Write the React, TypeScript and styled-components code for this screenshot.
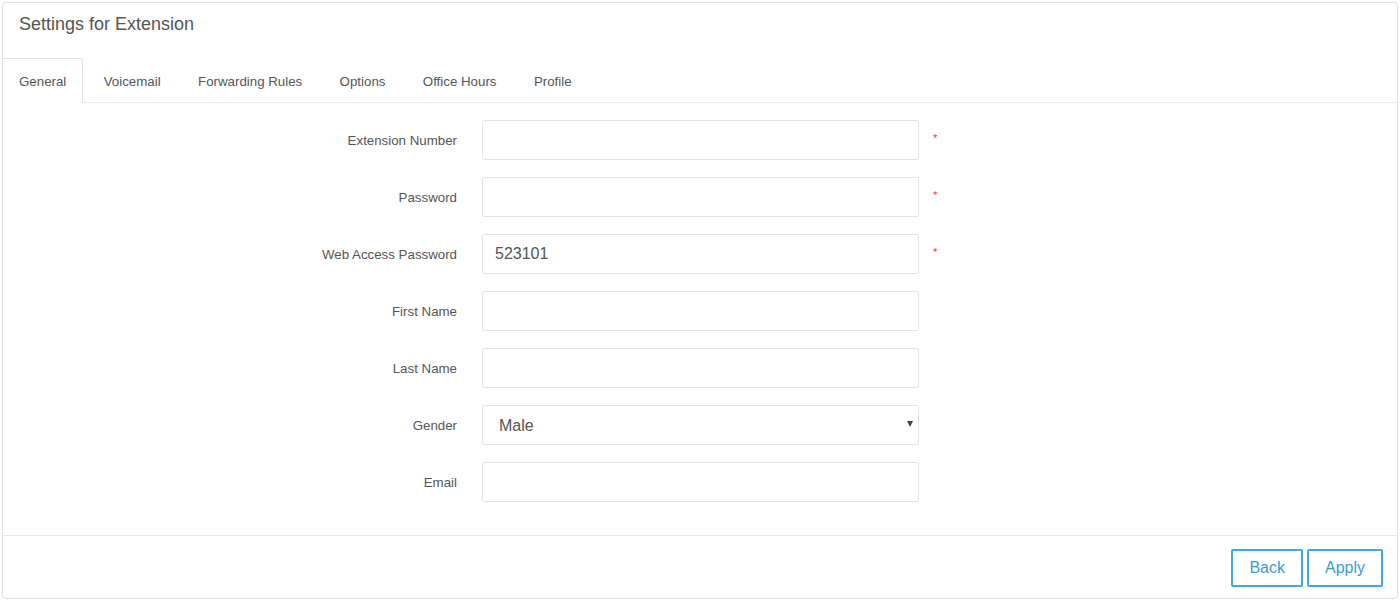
import React, { useState } from "react";
import styled, { createGlobalStyle } from "styled-components";

const GlobalStyle = createGlobalStyle`
  html, body {
    margin: 0;
    padding: 0;
    background: #fff;
    font-family: "Liberation Sans", Arial, sans-serif;
  }
  * { box-sizing: border-box; }
`;

const Panel = styled.div`
  margin: 2px 2px 2px 2px;
  height: 597px;
  border: 1px solid #dedede;
  border-radius: 4px;
  display: flex;
  flex-direction: column;
  background: #fff;
`;

const Header = styled.div`
  padding: 11px 16px 0;
  height: 55px;
  font-size: 18px;
  color: #555;
`;

const TabBar = styled.ul`
  list-style: none;
  margin: 0;
  padding: 0;
  display: flex;
  height: 45px;
  border-bottom: 1px solid #eaeaea;
`;

const Tab = styled.li<{ $active?: boolean }>`
  display: flex;
  align-items: center;
  padding: 2px 16px 0;
  margin-right: 4.4px;
  margin-bottom: ${(p) => (p.$active ? "-1px" : "0")};
  font-size: 13.3px;
  color: #555;
  cursor: pointer;
  border: 1px solid ${(p) => (p.$active ? "#e2e2e2" : "transparent")};
  border-bottom: ${(p) => (p.$active ? "1px solid #fff" : "none")};
  border-left: none;
  border-radius: 0 3px 0 0;
  background: ${(p) => (p.$active ? "#fff" : "transparent")};
`;

const Form = styled.div`
  flex: 1;
  display: grid;
  grid-template-columns: 454px 437px 20px;
  column-gap: 25px;
  row-gap: 17px;
  align-content: start;
  padding-top: 17px;
  border-bottom: 1px solid #e8e8e8;
`;

const Label = styled.label`
  display: flex;
  align-items: center;
  justify-content: flex-end;
  height: 40px;
  font-size: 13.3px;
  color: #555;
`;

const TextInput = styled.input`
  height: 40px;
  width: 100%;
  border: 1px solid #e3e3e3;
  border-radius: 2px;
  padding: 0 12px;
  font-family: inherit;
  font-size: 16px;
  color: #555;
  outline: none;
`;

const SelectWrap = styled.div`
  position: relative;
  height: 40px;
`;

const Select = styled.select`
  appearance: none;
  height: 40px;
  width: 100%;
  border: 1px solid #e3e3e3;
  border-radius: 2px;
  padding: 0 16px;
  background: #fff;
  font-family: inherit;
  font-size: 16px;
  color: #555;
  outline: none;
`;

const Caret = styled.span`
  position: absolute;
  right: 6px;
  top: 16px;
  width: 0;
  height: 0;
  border-left: 3.5px solid transparent;
  border-right: 3.5px solid transparent;
  border-top: 6px solid #444;
  pointer-events: none;
`;

const Required = styled.span`
  display: flex;
  align-items: center;
  height: 36px;
  margin-left: -11px;
  color: #f33;
  font-size: 11px;
`;

const Footer = styled.div`
  display: flex;
  justify-content: flex-end;
  gap: 4px;
  padding: 13px 14px 0 0;
  height: 62px;
`;

const Button = styled.button`
  height: 38px;
  padding: 0 16px;
  border: 2px solid #41a8e0;
  border-radius: 2px;
  background: #fff;
  color: #3a9ad8;
  font-family: inherit;
  font-size: 16px;
  cursor: pointer;
`;

const tabs = ["General", "Voicemail", "Forwarding Rules", "Options", "Office Hours", "Profile"];

type Field = { label: string; value?: string; required?: boolean; select?: boolean };

const fields: Field[] = [
  { label: "Extension Number", required: true },
  { label: "Password", required: true },
  { label: "Web Access Password", value: "523101", required: true },
  { label: "First Name" },
  { label: "Last Name" },
  { label: "Gender", select: true },
  { label: "Email" },
];

export default function App() {
  const [active, setActive] = useState(0);
  return (
    <>
      <GlobalStyle />
      <Panel>
        <Header>Settings for Extension</Header>
        <TabBar>
          {tabs.map((t, i) => (
            <Tab key={t} $active={i === active} onClick={() => setActive(i)}>
              {t}
            </Tab>
          ))}
        </TabBar>
        <Form>
          {fields.map((f) => (
            <React.Fragment key={f.label}>
              <Label>{f.label}</Label>
              {f.select ? (
                <SelectWrap>
                  <Select defaultValue="Male">
                    <option>Male</option>
                    <option>Female</option>
                  </Select>
                  <Caret />
                </SelectWrap>
              ) : (
                <TextInput defaultValue={f.value ?? ""} />
              )}
              <Required>{f.required ? "*" : ""}</Required>
            </React.Fragment>
          ))}
        </Form>
        <Footer>
          <Button>Back</Button>
          <Button>Apply</Button>
        </Footer>
      </Panel>
    </>
  );
}
